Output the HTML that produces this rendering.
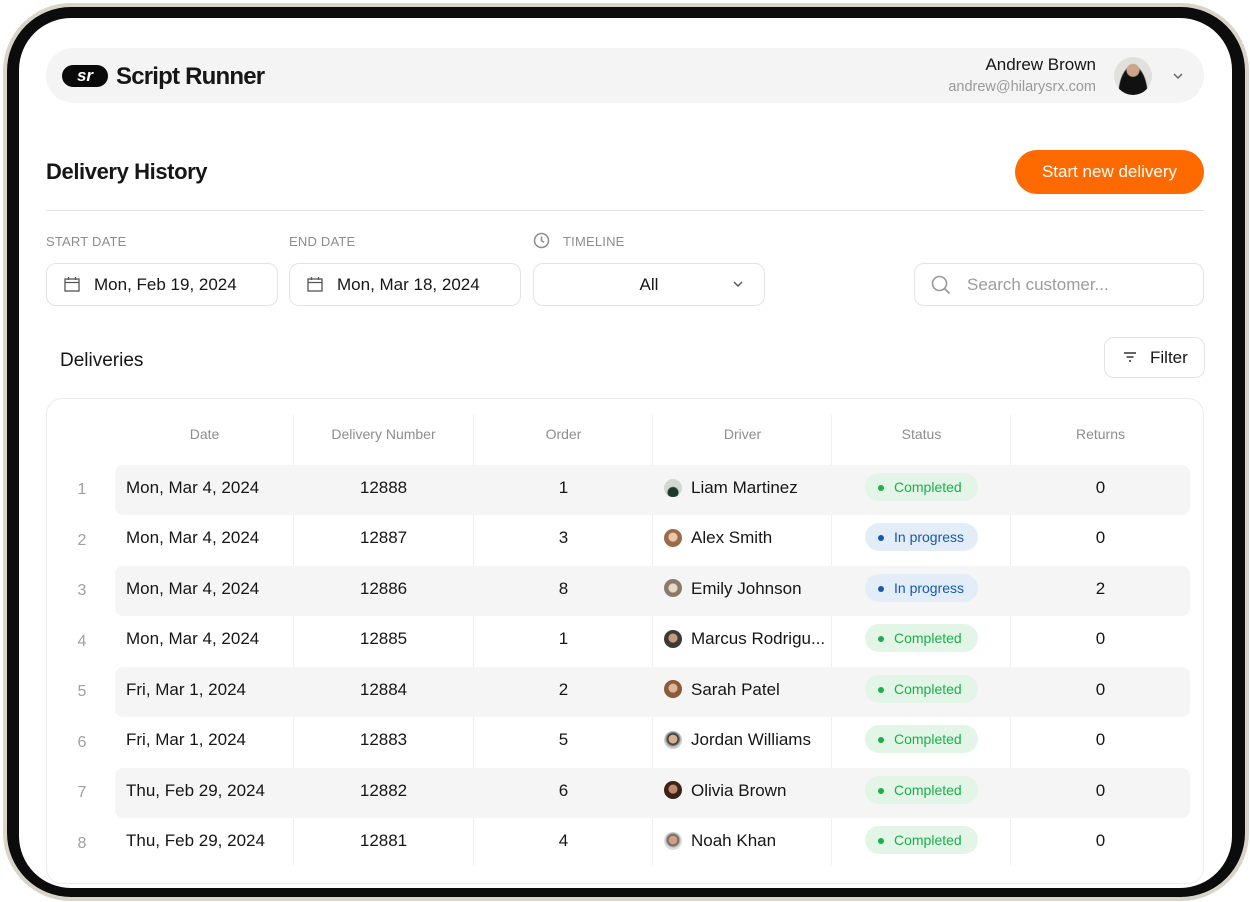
<!DOCTYPE html>
<html><head><meta charset="utf-8"><style>
*{box-sizing:border-box;margin:0;padding:0}
body{width:1250px;height:902px;background:#fff;position:relative;overflow:hidden;font-family:"Liberation Sans",Arial,sans-serif;color:#161616}
.frame{position:absolute;left:3px;top:3px;width:1246px;height:898px;border-radius:68px;background:#d9d3c8;}
.bezel{position:absolute;left:7px;top:7px;width:1238px;height:890px;border-radius:64px;background:#0c0c0c}
.screen{position:absolute;left:19px;top:18px;width:1213px;height:870px;border-radius:52px;background:#fff;overflow:hidden}
.a{position:absolute}
.hdr{left:27px;top:30px;width:1158px;height:55px;border-radius:28px;background:#f4f4f4}
.lbl{font-size:13px;color:#8d8d8d;letter-spacing:.2px}
.inp{height:43px;border:1px solid #e3e3e3;border-radius:10px;background:#fff;font-size:17px;display:flex;align-items:center}
.row{position:absolute;left:96px;width:1075px;height:50px;border-radius:8px}
.g{background:#f5f5f5}
.c{position:absolute;font-size:17px;transform:translateY(-50%)}
.ctr{text-align:center;width:179px}
.idx{position:absolute;font-size:16px;color:#a0a0a0;width:30px;text-align:center;transform:translateY(-50%)}
.badge{position:absolute;left:846px;width:113px;height:28px;border-radius:14px;font-size:14px;transform:translateY(-50%);padding-left:29px;line-height:28px}
.badge:before{content:"";position:absolute;left:13px;top:12px;width:6px;height:6px;border-radius:50%;background:currentColor}
.gr{background:#e2f5e7;color:#1bb04a}
.bl{background:#e3edf8;color:#1659b0}
.av{position:absolute;left:645px;width:18px;height:18px;border-radius:50%;transform:translateY(-50%)}
.sep{position:absolute;top:397px;width:1px;height:450px;background:#efefef}
.th{position:absolute;top:416px;font-size:14px;color:#8e8e8e;text-align:center;width:179px;transform:translateY(-50%)}
</style></head><body>
<div class="frame"></div><div class="bezel"></div>
<div class="screen">
<div class="a hdr"></div>
<div class="a" style="left:43px;top:47px;width:46px;height:22px;border-radius:11px;background:#0a0a0a;color:#fff;font-size:17px;font-weight:bold;font-style:italic;text-align:center;line-height:21px">sr</div>
<div class="a" style="left:97px;top:45px;font-size:24px;font-weight:bold;letter-spacing:-0.8px">Script Runner</div>
<div class="a" style="right:136px;top:37px;font-size:17px;text-align:right">Andrew Brown</div>
<div class="a" style="right:136px;top:61px;font-size:14.5px;color:#9a9a9a;text-align:right">andrew@hilarysrx.com</div>
<div class="a" style="left:1095px;top:39px;width:38px;height:38px;border-radius:50%;background:radial-gradient(circle at 50% 35%,#c9a58b 0 6px,transparent 7px),radial-gradient(ellipse at 50% 100%,#111 0 14px,transparent 15px),#e2e0dc"></div>
<svg class="a" style="left:1153px;top:52px" width="12" height="12" viewBox="0 0 12 12"><path d="M2 4l4 4 4-4" fill="none" stroke="#666" stroke-width="1.5"/></svg>

<div class="a" style="left:27px;top:141px;font-size:22px;font-weight:bold;letter-spacing:-0.4px">Delivery History</div>
<div class="a" style="left:996px;top:132px;width:189px;height:44px;border-radius:22px;background:#ff6a00;color:#fff;font-size:17px;text-align:center;line-height:44px">Start new delivery</div>
<div class="a" style="left:27px;top:192px;width:1158px;height:1px;background:#e4e4e4"></div>

<div class="a lbl" style="left:27px;top:216px">START DATE</div>
<div class="a lbl" style="left:270px;top:216px">END DATE</div>
<svg class="a" style="left:514px;top:214px" width="17" height="17" viewBox="0 0 17 17"><circle cx="8.5" cy="8.5" r="7" fill="none" stroke="#8d8d8d" stroke-width="1.5"/><path d="M8.5 4.5v4.3l2.6 1.6" fill="none" stroke="#8d8d8d" stroke-width="1.5"/></svg>
<div class="a lbl" style="left:544px;top:216px">TIMELINE</div>

<div class="a inp" style="left:27px;top:245px;width:232px;padding-left:47px">Mon, Feb 19, 2024</div>
<div class="a inp" style="left:270px;top:245px;width:232px;padding-left:47px">Mon, Mar 18, 2024</div>
<svg class="a" style="left:45px;top:259px" width="16" height="15" viewBox="0 0 16 15"><rect x="1" y="2" width="14" height="12" fill="none" stroke="#555" stroke-width="1.3"/><path d="M1 5.5h14M4.5 0v3M11.5 0v3" stroke="#555" stroke-width="1.3"/></svg>
<svg class="a" style="left:288px;top:259px" width="16" height="15" viewBox="0 0 16 15"><rect x="1" y="2" width="14" height="12" fill="none" stroke="#555" stroke-width="1.3"/><path d="M1 5.5h14M4.5 0v3M11.5 0v3" stroke="#555" stroke-width="1.3"/></svg>
<div class="a inp" style="left:514px;top:245px;width:232px;justify-content:center">All</div>
<svg class="a" style="left:713px;top:261px" width="12" height="10" viewBox="0 0 12 10"><path d="M2 3l4 4 4-4" fill="none" stroke="#555" stroke-width="1.4"/></svg>
<div class="a inp" style="left:895px;top:245px;width:290px;padding-left:52px;color:#9c9c9c">Search customer...</div>
<svg class="a" style="left:912px;top:257px" width="20" height="20" viewBox="0 0 20 20"><circle cx="8.5" cy="8.5" r="7" fill="none" stroke="#999" stroke-width="1.6"/><path d="M13.5 13.5l5 5" stroke="#999" stroke-width="1.6"/></svg>

<div class="a" style="left:41px;top:332px;font-size:19px;font-weight:500">Deliveries</div>
<div class="a inp" style="left:1085px;top:319px;width:101px;height:41px;padding-left:45px;font-weight:500">Filter</div>
<svg class="a" style="left:1104px;top:333px" width="14" height="12" viewBox="0 0 14 12"><path d="M1 2h12M3.5 6h7M6 10h2" stroke="#333" stroke-width="1.4"/></svg>

<div class="a" style="left:27px;top:380px;width:1158px;height:486px;border:1px solid #ececec;border-radius:16px"></div>
<div class="sep" style="left:274px"></div><div class="sep" style="left:454px"></div><div class="sep" style="left:633px"></div><div class="sep" style="left:812px"></div><div class="sep" style="left:991px"></div>
<div class="th" style="left:96px">Date</div><div class="th" style="left:275px">Delivery Number</div><div class="th" style="left:455px">Order</div><div class="th" style="left:634px">Driver</div><div class="th" style="left:813px">Status</div><div class="th" style="left:992px">Returns</div>

<div class="row g" style="top:447px"></div>
<div class="row g" style="top:548px"></div>
<div class="row g" style="top:649px"></div>
<div class="row g" style="top:750px"></div>

<div class="idx" style="left:48px;top:472px">1</div><div class="c" style="left:107px;top:470px">Mon, Mar 4, 2024</div><div class="c ctr" style="left:275px;top:470px">12888</div><div class="c ctr" style="left:455px;top:470px">1</div><div class="av" style="top:470px;background:radial-gradient(circle at 50% 75%,#1f3a2a 0 5px,#cfd8d2 6px)"></div><div class="c" style="left:672px;top:470px">Liam Martinez</div><div class="badge gr" style="top:469px">Completed</div><div class="c ctr" style="left:992px;top:470px">0</div>

<div class="idx" style="left:48px;top:523px">2</div><div class="c" style="left:107px;top:520px">Mon, Mar 4, 2024</div><div class="c ctr" style="left:275px;top:520px">12887</div><div class="c ctr" style="left:455px;top:520px">3</div><div class="av" style="top:520px;background:radial-gradient(circle at 50% 45%,#e9c7a8 0 4px,#9a6b4a 5px)"></div><div class="c" style="left:672px;top:520px">Alex Smith</div><div class="badge bl" style="top:519px">In progress</div><div class="c ctr" style="left:992px;top:520px">0</div>

<div class="idx" style="left:48px;top:573px">3</div><div class="c" style="left:107px;top:571px">Mon, Mar 4, 2024</div><div class="c ctr" style="left:275px;top:571px">12886</div><div class="c ctr" style="left:455px;top:571px">8</div><div class="av" style="top:570px;background:radial-gradient(circle at 50% 50%,#e8d8c8 0 4px,#8a7a6a 5px)"></div><div class="c" style="left:672px;top:571px">Emily Johnson</div><div class="badge bl" style="top:570px">In progress</div><div class="c ctr" style="left:992px;top:571px">2</div>

<div class="idx" style="left:48px;top:624px">4</div><div class="c" style="left:107px;top:621px">Mon, Mar 4, 2024</div><div class="c ctr" style="left:275px;top:621px">12885</div><div class="c ctr" style="left:455px;top:621px">1</div><div class="av" style="top:621px;background:radial-gradient(circle at 50% 45%,#c89a7a 0 4px,#3a3a3a 5px)"></div><div class="c" style="left:672px;top:621px">Marcus Rodrigu...</div><div class="badge gr" style="top:620px">Completed</div><div class="c ctr" style="left:992px;top:621px">0</div>

<div class="idx" style="left:48px;top:674px">5</div><div class="c" style="left:107px;top:672px">Fri, Mar 1, 2024</div><div class="c ctr" style="left:275px;top:672px">12884</div><div class="c ctr" style="left:455px;top:672px">2</div><div class="av" style="top:671px;background:radial-gradient(circle at 50% 45%,#e0b49a 0 4px,#8a5a3a 5px)"></div><div class="c" style="left:672px;top:672px">Sarah Patel</div><div class="badge gr" style="top:671px">Completed</div><div class="c ctr" style="left:992px;top:672px">0</div>

<div class="idx" style="left:48px;top:725px">6</div><div class="c" style="left:107px;top:722px">Fri, Mar 1, 2024</div><div class="c ctr" style="left:275px;top:722px">12883</div><div class="c ctr" style="left:455px;top:722px">5</div><div class="av" style="top:722px;background:radial-gradient(circle at 50% 45%,#d8b090 0 4px,#2a2a2a 5px,#ccc 8px)"></div><div class="c" style="left:672px;top:722px">Jordan Williams</div><div class="badge gr" style="top:721px">Completed</div><div class="c ctr" style="left:992px;top:722px">0</div>

<div class="idx" style="left:48px;top:775px">7</div><div class="c" style="left:107px;top:773px">Thu, Feb 29, 2024</div><div class="c ctr" style="left:275px;top:773px">12882</div><div class="c ctr" style="left:455px;top:773px">6</div><div class="av" style="top:772px;background:radial-gradient(circle at 50% 45%,#c08a6a 0 4px,#3a2218 5px)"></div><div class="c" style="left:672px;top:773px">Olivia Brown</div><div class="badge gr" style="top:772px">Completed</div><div class="c ctr" style="left:992px;top:773px">0</div>

<div class="idx" style="left:48px;top:826px">8</div><div class="c" style="left:107px;top:823px">Thu, Feb 29, 2024</div><div class="c ctr" style="left:275px;top:823px">12881</div><div class="c ctr" style="left:455px;top:823px">4</div><div class="av" style="top:823px;background:radial-gradient(circle at 50% 45%,#d0a080 0 4px,#5a5a5a 5px,#ddd 8px)"></div><div class="c" style="left:672px;top:823px">Noah Khan</div><div class="badge gr" style="top:822px">Completed</div><div class="c ctr" style="left:992px;top:823px">0</div>
</div>
</body></html>
